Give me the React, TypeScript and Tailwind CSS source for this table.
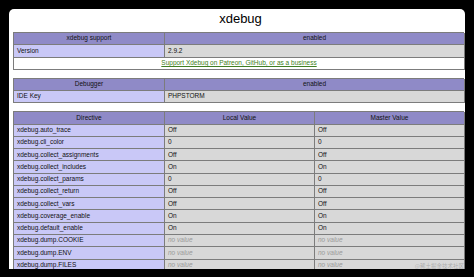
import type { ReactNode } from 'react';

type Row = { name: string; local: string; master: string };

const directives: Row[] = [
  { name: 'xdebug.auto_trace', local: 'Off', master: 'Off' },
  { name: 'xdebug.cli_color', local: '0', master: '0' },
  { name: 'xdebug.collect_assignments', local: 'Off', master: 'Off' },
  { name: 'xdebug.collect_includes', local: 'On', master: 'On' },
  { name: 'xdebug.collect_params', local: '0', master: '0' },
  { name: 'xdebug.collect_return', local: 'Off', master: 'Off' },
  { name: 'xdebug.collect_vars', local: 'Off', master: 'Off' },
  { name: 'xdebug.coverage_enable', local: 'On', master: 'On' },
  { name: 'xdebug.default_enable', local: 'On', master: 'On' },
  { name: 'xdebug.dump.COOKIE', local: '', master: '' },
  { name: 'xdebug.dump.ENV', local: '', master: '' },
  { name: 'xdebug.dump.FILES', local: '', master: '' },
];

// phpinfo-ish cell styles
const cell = 'h-[12.27px] shrink-0 border-r border-b border-[#7c7c7c] px-[3px] flex items-center overflow-hidden whitespace-nowrap';
const head = `${cell} justify-center bg-[#8f8ac7]`;
const key = `${cell} bg-[#c9c8f7]`;
const val = `${cell} bg-[#d8d8d8]`;

function Value({ v }: { v: string }) {
  if (!v) return <span className="italic text-[#9a9a9a]">no value</span>;
  return <>{v}</>;
}

function Table({ cols, children, className = '' }: { cols: string; children: ReactNode; className?: string }) {
  return (
    <div className={`grid w-[451px] border-t border-l border-[#7c7c7c] ${cols} ${className}`}>{children}</div>
  );
}

export default function App() {
  return (
    <div
      className="relative h-[277px] w-[474px] overflow-hidden bg-black pt-[9px] pl-[9px] text-[#111]"
      style={{ fontFamily: '"Liberation Sans", Arial, sans-serif' }}
    >
      <div className="flex h-[260px] w-[456px] flex-col overflow-hidden rounded-t-[5px] bg-white pl-[4px]">
        <div className="flex h-[19px] shrink-0 items-center justify-center pl-[3px] text-[13px] leading-none text-black">
          xdebug
        </div>
        <div className="h-[4px] shrink-0" />

        <div className="text-[6.5px] leading-none">
          <Table cols="grid-cols-[151px_300px]">
            <div className={head}>xdebug support</div>
            <div className={head}>enabled</div>
            <div className={key}>Version</div>
            <div className={val}>2.9.2</div>
            <div className={`${cell} col-span-2 justify-center bg-white`}>
              <span className="text-[#3f7f22] underline">Support Xdebug on Patreon, GitHub, or as a business</span>
            </div>
          </Table>

          <Table cols="grid-cols-[151px_300px]" className="mt-[8px]">
            <div className={head}>Debugger</div>
            <div className={head}>enabled</div>
            <div className={key}>IDE Key</div>
            <div className={val}>PHPSTORM</div>
          </Table>

          <Table cols="grid-cols-[151px_150px_150px]" className="mt-[8px]">
            <div className={head}>Directive</div>
            <div className={head}>Local Value</div>
            <div className={head}>Master Value</div>
            {directives.map((d) => (
              <div key={d.name} className="contents">
                <div className={key}>{d.name}</div>
                <div className={val}>
                  <Value v={d.local} />
                </div>
                <div className={val}>
                  <Value v={d.master} />
                </div>
              </div>
            ))}
          </Table>
        </div>
      </div>

      {/* watermark */}
      <div
        className="absolute right-[10px] bottom-[8px] text-[5.5px] leading-none text-[#9a9a9a]/70"
        style={{ fontFamily: '"Noto Sans CJK SC", sans-serif' }}
      >
        @稀土掘金技术社区
      </div>
    </div>
  );
}
